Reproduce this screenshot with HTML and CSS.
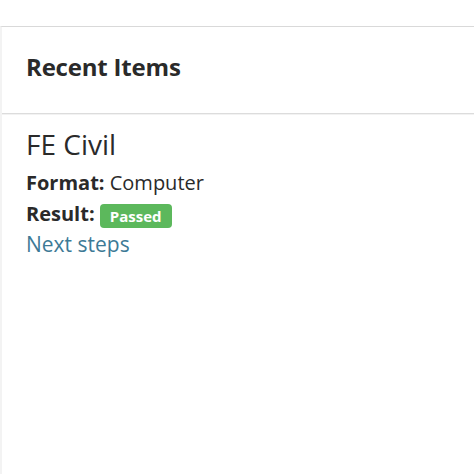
FILE: index.html
```html
<!DOCTYPE html>
<html>
<head>
<meta charset="utf-8">
<link rel="stylesheet" href="styles.css">
</head>
<body>
<section class="card">
  <header class="card-header">
    <h2 class="card-title">Recent Items</h2>
  </header>
  <div class="card-body">
    <h3 class="item-title">FE Civil</h3>
    <p class="item-line"><strong>Format:</strong> Computer</p>
    <p class="item-line"><strong>Result:</strong> <span class="badge">Passed</span></p>
    <a class="item-link" href="#">Next steps</a>
  </div>
</section>
</body>
</html>
```
FILE: styles.css
```css
html, body {
  margin: 0;
  padding: 0;
  background: #fff;
}
body {
  font-family: "Open Sans", Lato, sans-serif;
  color: #2b2b2b;
  padding-top: 26px;
}
.card {
  border-top: 1px solid #d9d9d9;
  border-left: 2px solid #f3f3f3;
  height: 448px;
  box-sizing: border-box;
}
.card-header {
  padding: 24px 24px 30px;
  border-bottom: 1px solid #dcdcdc;
  box-shadow: 0 1px 0 #f2f2f2;
}
.card-title {
  margin: 0;
  font-size: 24px;
  line-height: 32px;
  font-weight: 700;
  color: #2a2a2a;
  letter-spacing: -0.2px;
}
.card-body {
  padding: 13px 24px;
}
.item-title {
  margin: 0 0 6px;
  font-size: 28px;
  line-height: 34px;
  font-weight: 400;
  color: #2a2a2a;
}
.item-line {
  margin: 0;
  font-size: 20px;
  line-height: 31px;
  color: #2a2a2a;
}
.item-line strong {
  font-weight: 700;
}
.badge {
  display: inline-block;
  background: #5cb85c;
  color: #fff;
  font-size: 15px;
  font-weight: 700;
  line-height: 24px;
  padding: 0 10px;
  border-radius: 4px;
  vertical-align: middle;
}
.item-link {
  display: block;
  font-size: 21px;
  line-height: 31px;
  color: #3d7a96;
  text-decoration: none;
}
```
